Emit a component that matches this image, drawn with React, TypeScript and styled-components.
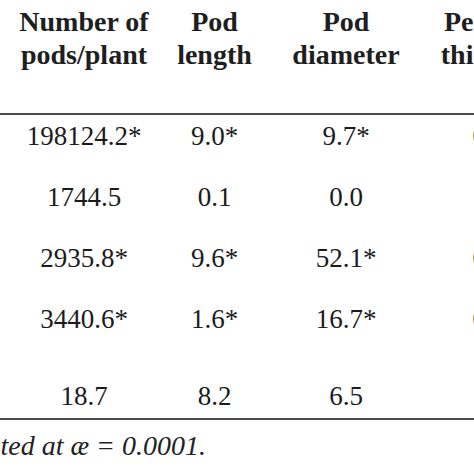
import styled, { createGlobalStyle } from "styled-components";

const serif =
  "'Liberation Serif', LiberationSerif, Tinos, 'Times New Roman', Times, 'DejaVu Serif', serif";

const GlobalStyle = createGlobalStyle`
  html, body {
    margin: 0;
    padding: 0;
    background: #ffffff;
    overflow: hidden;
  }
  body {
    font-family: ${serif};
    color: #1b1b1b;
  }
`;

const columns = "19px 130px 131px 132px 168px";

const Page = styled.div`
  width: 474px;
  height: 474px;
  overflow: hidden;
  background: #fff;
  font-family: ${serif};
`;

const Table = styled.div`
  width: 474px;
  overflow: hidden;
`;

const HeadRow = styled.div`
  display: grid;
  grid-template-columns: ${columns};
  padding: 5px 0 42px;
  border-bottom: 2px solid #4a4a4a;
`;

const HeadCell = styled.div`
  font-family: ${serif};
  font-size: 28px;
  font-weight: 700;
  line-height: 33px;
  text-align: center;
  white-space: nowrap;
  color: #1e1e1e;
`;

const Body = styled.div`
  display: flex;
  flex-direction: column;
  gap: 31px;
  padding: 6px 0 7px;
  border-bottom: 2px solid #4a4a4a;
`;

const Row = styled.div<{ $spaced?: boolean }>`
  display: grid;
  grid-template-columns: ${columns};
  margin-top: ${(p) => (p.$spaced ? "16px" : "0")};
`;

const Cell = styled.div`
  font-family: ${serif};
  font-size: 27px;
  line-height: 30px;
  text-align: center;
  white-space: nowrap;
  color: #1b1b1b;
`;

const Footnote = styled.div`
  width: 206px;
  display: flex;
  justify-content: flex-end;
  margin-top: 11px;
  overflow: hidden;
`;

const Note = styled.span`
  font-family: ${serif};
  font-size: 28px;
  font-style: italic;
  line-height: 30px;
  white-space: nowrap;
  color: #222;
`;

const headers: string[][] = [
  ["Number of", "pods/plant"],
  ["Pod", "length"],
  ["Pod", "diameter"],
  ["Pericarp", "thickness"],
];

const rows: { values: string[]; spaced?: boolean }[] = [
  { values: ["198124.2*", "9.0*", "9.7*", "0.8*"] },
  { values: ["1744.5", "0.1", "0.0", "0.0"] },
  { values: ["2935.8*", "9.6*", "52.1*", "0.5*"] },
  { values: ["3440.6*", "1.6*", "16.7*", "0.3*"] },
  { values: ["18.7", "8.2", "6.5", "5.2"], spaced: true },
];

export default function App() {
  return (
    <Page>
      <GlobalStyle />
      <Table>
        <HeadRow>
          <span />
          {headers.map((h, i) => (
            <HeadCell key={i}>
              {h[0]}
              <br />
              {h[1]}
            </HeadCell>
          ))}
        </HeadRow>
        <Body>
          {rows.map((r, i) => (
            <Row key={i} $spaced={r.spaced}>
              <span />
              {r.values.map((v, j) => (
                <Cell key={j}>{v}</Cell>
              ))}
            </Row>
          ))}
        </Body>
      </Table>
      <Footnote>
        <Note>*F-values significant when tested at æ = 0.0001.</Note>
      </Footnote>
    </Page>
  );
}
